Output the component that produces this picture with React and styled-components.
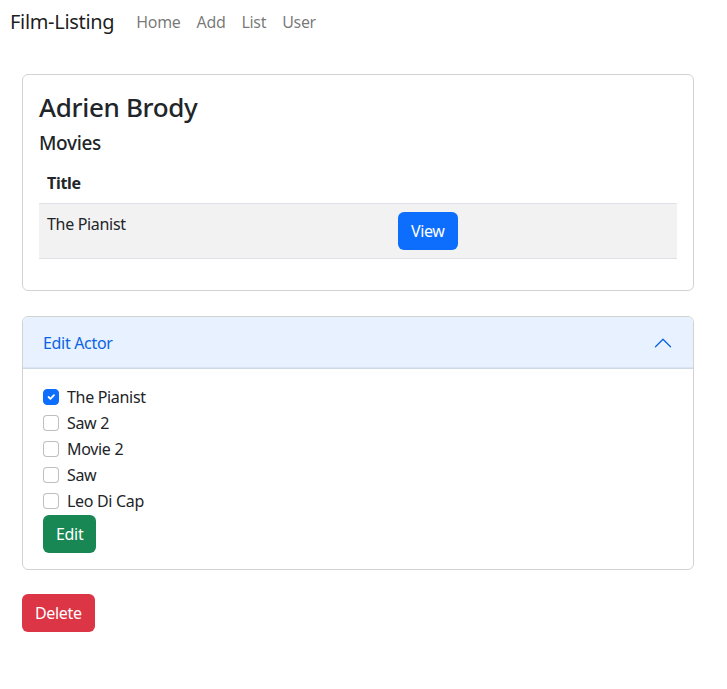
import React from "react";
import styled, { createGlobalStyle } from "styled-components";

const GlobalStyle = createGlobalStyle`
  * { box-sizing: border-box; }
  body {
    margin: 0;
    font-family: "Noto Sans", "Segoe UI", sans-serif;
    font-size: 16px;
    line-height: 1.5;
    letter-spacing: -0.02em;
    color: #212529;
    background: #fff;
  }
`;

const Navbar = styled.nav`
  display: flex;
  align-items: center;
  height: 44px;
  padding: 0 10px;
`;

const Brand = styled.a`
  font-size: 20px;
  line-height: 30px;
  color: rgba(0, 0, 0, 0.9);
  margin-right: 14px;
`;

const NavLink = styled.a`
  padding: 0 8px;
  color: rgba(0, 0, 0, 0.55);
  line-height: 24px;
`;

const Main = styled.main`
  padding: 30px 33px 40px 22px;
  display: flex;
  flex-direction: column;
  align-items: flex-start;
`;

const Card = styled.section`
  width: 100%;
  border: 1px solid rgba(0, 0, 0, 0.175);
  border-radius: 6px;
  padding: 17px 16px 15px;
`;

const Name = styled.h2`
  margin: 0 0 8px;
  font-size: 26px;
  font-weight: 500;
  line-height: 31px;
`;

const SubTitle = styled.h4`
  margin: 0 0 8px;
  font-size: 19px;
  font-weight: 500;
  line-height: 24px;
`;

const Table = styled.table`
  width: 100%;
  border-collapse: collapse;
  margin-bottom: 16px;
`;

const Th = styled.th`
  text-align: left;
  padding: 8px;
  font-weight: 700;
  border-bottom: 1px solid #dee2e6;
`;

const Td = styled.td`
  padding: 8px;
  vertical-align: top;
  border-bottom: 1px solid #dee2e6;
  background: ${(p) => (p.$striped ? "#f2f2f2" : "transparent")};
  width: ${(p) => p.$w || "auto"};
`;

const Button = styled.button`
  font-family: inherit;
  font-size: 16px;
  line-height: 24px;
  letter-spacing: -0.02em;
  padding: 6px 12px;
  border: 1px solid transparent;
  border-radius: 6px;
  color: #fff;
  background: ${(p) => p.$bg};
  cursor: pointer;
`;

const Accordion = styled.section`
  width: 100%;
  margin-top: 25px;
  border: 1px solid rgba(0, 0, 0, 0.175);
  border-radius: 6px;
  overflow: hidden;
`;

const AccHeader = styled.div`
  display: flex;
  align-items: center;
  justify-content: space-between;
  height: 52px;
  padding: 0 20px;
  background: #e7f1ff;
  color: #0c63e4;
  border-bottom: 1px solid rgba(0, 0, 0, 0.1);
  box-shadow: inset 0 -1px 0 rgba(0, 0, 0, 0.05);
`;

const AccBody = styled.div`
  padding: 16px 20px;
`;

const Check = styled.label`
  display: flex;
  align-items: center;
  gap: 8px;
  min-height: 24px;
  margin-bottom: 2px;
`;

const Box = styled.span`
  width: 16px;
  height: 16px;
  border-radius: 4px;
  display: inline-flex;
  align-items: center;
  justify-content: center;
  border: 1px solid ${(p) => (p.$checked ? "#0d6efd" : "rgba(0,0,0,0.25)")};
  background: ${(p) => (p.$checked ? "#0d6efd" : "#fff")};
`;

const DeleteWrap = styled.div`
  margin-top: 24px;
`;

const movies = [
  { name: "The Pianist", checked: true },
  { name: "Saw 2" },
  { name: "Movie 2" },
  { name: "Saw" },
  { name: "Leo Di Cap" },
];

export default function App() {
  return (
    <>
      <GlobalStyle />
      <Navbar>
        <Brand>Film-Listing</Brand>
        <NavLink>Home</NavLink>
        <NavLink>Add</NavLink>
        <NavLink>List</NavLink>
        <NavLink>User</NavLink>
      </Navbar>
      <Main>
        <Card>
          <Name>Adrien Brody</Name>
          <SubTitle>Movies</SubTitle>
          <Table>
            <thead>
              <tr>
                <Th>Title</Th>
                <Th />
              </tr>
            </thead>
            <tbody>
              <tr>
                <Td $striped $w="55%">The Pianist</Td>
                <Td $striped>
                  <Button $bg="#0d6efd">View</Button>
                </Td>
              </tr>
            </tbody>
          </Table>
        </Card>

        <Accordion>
          <AccHeader>
            <span>Edit Actor</span>
            <svg width="20" height="20" viewBox="0 0 16 16" fill="#0c63e4">
              <path d="M7.646 4.646a.5.5 0 0 1 .708 0l6 6a.5.5 0 0 1-.708.708L8 5.707l-5.646 5.647a.5.5 0 0 1-.708-.708l6-6z" />
            </svg>
          </AccHeader>
          <AccBody>
            {movies.map((m) => (
              <Check key={m.name}>
                <Box $checked={m.checked}>
                  {m.checked && (
                    <svg width="12" height="12" viewBox="0 0 20 20">
                      <path
                        d="M6 10l3 3 6-6"
                        fill="none"
                        stroke="#fff"
                        strokeWidth="3"
                        strokeLinecap="round"
                        strokeLinejoin="round"
                      />
                    </svg>
                  )}
                </Box>
                {m.name}
              </Check>
            ))}
            <Button $bg="#198754">Edit</Button>
          </AccBody>
        </Accordion>

        <DeleteWrap>
          <Button $bg="#dc3545">Delete</Button>
        </DeleteWrap>
      </Main>
    </>
  );
}
